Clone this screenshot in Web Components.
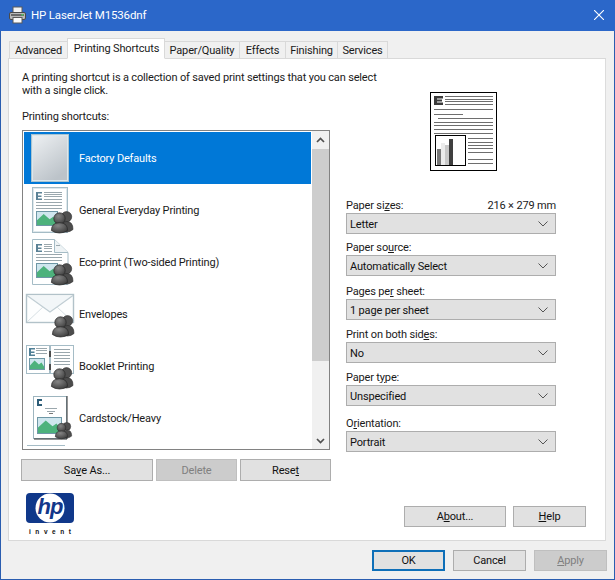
<!DOCTYPE html>
<html><head><meta charset="utf-8"><title>HP LaserJet M1536dnf</title>
<style>
html,body{margin:0;padding:0;background:#f0f0f0}
body{font:11px/13px Roboto,"Liberation Sans",sans-serif;letter-spacing:-.16px;color:#1a1a1a}
u{text-underline-offset:1px}
hp-option.a{margin-top:5px}hp-option.b{margin-top:7px}hp-option.c{margin-top:6px}hp-option.d{margin-top:9px}
</style></head><body>
<hp-dialog>
  <span slot="title">HP LaserJet M1536dnf</span>
  <hp-tabs slot="tabs">
    <hp-tab w="59">Advanced</hp-tab>
    <hp-tab w="98" selected>Printing Shortcuts</hp-tab>
    <hp-tab w="75">Paper/Quality</hp-tab>
    <hp-tab w="46">Effects</hp-tab>
    <hp-tab w="52">Finishing</hp-tab>
    <hp-tab w="50">Services</hp-tab>
  </hp-tabs>
  <hp-shortcuts-page slot="page">
    <span slot="desc">A printing shortcut is a collection of saved print settings that you can select<br>with a single click.</span>
    <span slot="listlabel">Printing shortcuts:</span>
    <hp-shortcut-list slot="list">
      <hp-shortcut icon="blank" selected>Factory Defaults</hp-shortcut>
      <hp-shortcut icon="general">General Everyday Printing</hp-shortcut>
      <hp-shortcut icon="eco">Eco-print (Two-sided Printing)</hp-shortcut>
      <hp-shortcut icon="envelope">Envelopes</hp-shortcut>
      <hp-shortcut icon="booklet">Booklet Printing</hp-shortcut>
      <hp-shortcut icon="cardstock">Cardstock/Heavy</hp-shortcut>
      <hp-shortcut icon="next"></hp-shortcut>
    </hp-shortcut-list>
    <hp-button slot="actions" w="132" h="22">Sa<u>v</u>e As...</hp-button>
    <hp-button slot="actions" w="81" h="22" disabled>Delete</hp-button>
    <hp-button slot="actions" w="91" h="22">Rese<u>t</u></hp-button>
    <hp-preview slot="preview"></hp-preview>
    <hp-option slot="options"><span slot="label">Paper si<u>z</u>es:</span><span slot="note">216 × 279 mm</span>Letter</hp-option>
    <hp-option slot="options" class="a"><span slot="label">Paper so<u>u</u>rce:</span>Automatically Select</hp-option>
    <hp-option slot="options" class="b"><span slot="label">Pages pe<u>r</u> sheet:</span>1 page per sheet</hp-option>
    <hp-option slot="options" class="c"><span slot="label">Print on both sid<u>e</u>s:</span>No</hp-option>
    <hp-option slot="options" class="c"><span slot="label">Paper t<u>y</u>pe:</span>Unspecified</hp-option>
    <hp-option slot="options" class="d"><span slot="label">O<u>r</u>ientation:</span>Portrait</hp-option>
    <hp-logo slot="logo"></hp-logo>
    <hp-button slot="help" w="102" h="21">A<u>b</u>out...</hp-button>
    <hp-button slot="help" w="73" h="21"><u>H</u>elp</hp-button>
  </hp-shortcuts-page>
  <hp-button slot="footer" w="73" h="21" primary>OK</hp-button>
  <hp-button slot="footer" w="73" h="21">Cancel</hp-button>
  <hp-button slot="footer" w="73" h="21" disabled><u>A</u>pply</hp-button>
</hp-dialog>
<script>
function def(name, css, html, init){
  customElements.define(name, class extends HTMLElement{
    constructor(){super();const r=this.attachShadow({mode:'open'});
      r.innerHTML='<style>'+css+'</style>'+(typeof html==='function'?html(this):html);}
    connectedCallback(){ if(init) init(this); }
  });
}
const people=(x,y,s)=>`<g transform="translate(${x} ${y}) scale(${s})">
<circle cx="15.5" cy="5.800" r="5.200" fill="#505050" stroke="#2c2c2c" stroke-width=".6"/>
<path d="M9 19q0-8.500 6.800-8.500q6.200 0 6.200 8q-3 2.500-6.500 2.500t-6.500-2z" fill="#4c4c4c" stroke="#2c2c2c" stroke-width=".6"/>
<circle cx="8.500" cy="7.500" r="5.700" fill="url(#pg)" stroke="#262626" stroke-width=".7"/>
<path d="M.4 19.500q0-7.800 8.100-7.800t8.100 7.800q-3.500 2.500-8.100 2.500t-8.100-2.500z" fill="url(#pg)" stroke="#262626" stroke-width=".7"/>
</g>`;
const defs=`<defs>
<radialGradient id="pg" cx=".4" cy=".3" r=".8"><stop offset="0" stop-color="#858585"/><stop offset="1" stop-color="#383838"/></radialGradient>
<linearGradient id="blank" x1="0" y1="0" x2=".6" y2="1"><stop offset="0" stop-color="#eef1f3"/><stop offset="1" stop-color="#bcc3c9"/></linearGradient>
</defs>`;
const land=(x,y,w,h)=>`<rect x="${x+.5}" y="${y+.5}" width="${w-1}" height="${h-1}" fill="#cfe6ee" stroke="#6e97a6" stroke-width="1"/>
<path d="M${x+1} ${y+h-1}V${y+h*.62}L${x+w*.35} ${y+h*.2}L${x+w*.62} ${y+h*.55}L${x+w*.78} ${y+h*.38}L${x+w-1} ${y+h*.7}V${y+h-1}z" fill="#4db27c"/>`;
const eblk=(x,y,c)=>`<path d="M${x} ${y}h6v1.600h-4v1.800h3.500v1.500h-3.500v1.600h4v1.500h-6z" fill="${c||'#5b8296'}"/>`;
const lines=(x1,x2,ys,c)=>ys.map(y=>`<path d="M${x1} ${y}.5H${x2}" stroke="${c||'#9aa7ad'}"/>`).join('');
const pagebox=(x,y,w,h)=>`<rect x="${x+.5}" y="${y+.5}" width="${w-1}" height="${h-1}" fill="#fff" stroke="#a5bcc6"/><rect x="${x+1.5}" y="${y+1.5}" width="${w-3}" height="${h-3}" fill="#fff" stroke="#dfe8ec"/>`;
const icons={
 blank:`<rect x="7.500" y="2.500" width="37" height="47" fill="url(#blank)" stroke="#a9c4d0"/><rect x="8.500" y="3.500" width="35" height="45" fill="url(#blank)" stroke="#dde7ec"/>`,
 general:pagebox(8,3,36,46)+eblk(12,8)+lines(20,38,[8,10,12,15])+lines(12,38,[18,21,24])+land(12,27,22,15)+people(27,27,1),
 eco:`<path d="M8.500 3.500h22l13.500 13v32h-35.500z" fill="#fff" stroke="#a5bcc6"/><path d="M30.500 3.500v13h13.500" fill="#eef3f5" stroke="#a5bcc6"/>`+lines(32,36,[9])+eblk(12,8)+lines(20,28,[8,10,12,15])+lines(12,38,[18,21,24])+land(12,27,22,15)+people(27,27,1),
 envelope:`<rect x="2.500" y="6.500" width="47" height="28" fill="#fdfefe" stroke="#b2c2c9" stroke-width="1.400"/><path d="M3 7.500L26 24L49 7.500" fill="#f2f6f8" stroke="#c1ced4" stroke-width="1.200"/><path d="M3 34L19 19M49 34L33 19" stroke="#d7e0e4" fill="none"/>`+people(28,27,1),
 booklet:`<rect x="2.500" y="5.500" width="23" height="28" fill="#fff" stroke="#a5bcc6"/><rect x="26.500" y="5.500" width="23" height="28" fill="#fff" stroke="#a5bcc6"/><rect x="25" y="11" width="2" height="6" fill="#4c4c4c"/><rect x="25" y="24" width="2" height="6" fill="#4c4c4c"/>`+eblk(5,8,'#4f7f96')+lines(12,23,[8,10,13])+lines(30,46,[9,12,15,18,21,24])+land(5,18,16,12),
 cardstock:`<rect x="9.500" y="4.500" width="33" height="42" fill="#fff" stroke="#9db5bf"/><path d="M43 4v43H10" fill="none" stroke="#2c2c2c" stroke-width="1"/><path d="M13 7h5v2h-3v3h3v2h-5z" fill="#2d5d78"/>`+lines(21,33,[16])+lines(23,31,[19])+lines(25,29,[21],'#777')+land(13,25,25,17)+people(31,30,.76),
 next:`<path d="M3 1.500H41" stroke="#a5bcc6"/>`
};
icons.booklet+=people(27,27,1);

def('hp-dialog',`
:host{display:flex;flex-direction:column;width:615px;height:580px;box-sizing:border-box;border:1px solid #2a5db0;border-top:0;background:#f0f0f0}
.bar{height:31px;flex:none;background:#2b67c9;color:#fff;display:flex;align-items:center;margin:0 -1px;padding-left:9px;gap:5px;box-sizing:border-box;font-size:11.500px;padding-bottom:1px}
.bar svg.pr{flex:none}
.bar .x{margin-left:auto;margin-right:11px;flex:none}
.main{flex:1;display:flex;flex-direction:column;padding:7px 8px 0 7px;min-height:0}
.foot{flex:none;height:38px;box-sizing:border-box;display:flex;justify-content:flex-end;gap:8px;padding:9px 7px 0 0}
`,`
<div class="bar">
<svg class="pr" width="17" height="18" viewBox="0 0 17 18"><rect x="4" y="1" width="9" height="6" fill="#f3f3f3" stroke="#5a5a5a"/><rect x=".5" y="6.500" width="16" height="7" rx="1.500" fill="#b9b9b9" stroke="#4a4a4a"/><rect x="2" y="8" width="13" height="2" fill="#6a6a6a"/><rect x="4" y="11.500" width="9" height="5.500" fill="#fbfbfb" stroke="#5a5a5a"/><rect x="12.500" y="8" width="2" height="1.500" fill="#4fd05f"/></svg>
<slot name="title"></slot>
<svg class="x" width="10" height="10" viewBox="0 0 10 10"><path d="M0 0L10 10M10 0L0 10" stroke="#fff" stroke-width="1.100"/></svg>
</div>
<div class="main"><slot name="tabs"></slot><slot name="page"></slot></div>
<div class="foot"><slot name="footer"></slot></div>`);

def('hp-tabs',`:host{display:flex;align-items:flex-end;height:21px;margin-left:1px;position:relative;z-index:1;flex:none;margin-bottom:-1px}`,`<slot></slot>`);

def('hp-tab',`
:host{display:flex;align-items:center;justify-content:center;box-sizing:border-box;height:18px;border:1px solid #d9d9d9;border-bottom:1px solid #d9d9d9;border-left-width:0;background:#f0f0f0;white-space:nowrap;padding-top:0}
:host(:first-child){border-left-width:1px}
:host([selected]){height:21px;background:#fff;border-left-width:1px;border-bottom-color:#fff;margin-left:-1px;padding:0 0 1px 1px}
`,`<slot></slot>`,el=>{el.style.width=el.getAttribute('w')+'px';});

def('hp-shortcuts-page',`
:host{display:flex;flex-direction:column;flex:1;box-sizing:border-box;background:#fff;border:1px solid #d9d9d9;margin-left:0;min-height:0;padding:12px 19px 0 12px;border-right-color:#dcdcdc}
.top{display:flex;gap:15px;flex:none}
.left{width:310px;flex:none;display:flex;flex-direction:column}
.desc{padding-left:1px;display:block;white-space:nowrap}
.lbl{padding-left:1px;margin-top:13px;margin-bottom:7px;display:block}
.acts{display:flex;gap:3px;margin-top:9px}
.right{width:210px;flex:none;display:flex;flex-direction:column;padding-top:21px}
.pv{margin-left:84px;margin-bottom:26px}
.bot{display:flex;flex:none;margin-top:12px}
.lg{margin-left:5px}
.hl{margin-left:auto;margin-top:13px;display:flex;gap:7px}
`,`
<div class="top">
  <div class="left">
    <div class="desc"><slot name="desc"></slot></div>
    <div class="lbl"><slot name="listlabel"></slot></div>
    <slot name="list"></slot>
    <div class="acts"><slot name="actions"></slot></div>
  </div>
  <div class="right">
    <div class="pv"><slot name="preview"></slot></div>
    <slot name="options"></slot>
  </div>
</div>
<div class="bot"><div class="lg"><slot name="logo"></slot></div><div class="hl"><slot name="help"></slot></div></div>`);

def('hp-shortcut-list',`
:host{display:flex;box-sizing:border-box;height:320px;margin-left:1px;width:308px;border:1px solid #828282;background:#fff;overflow:hidden}
.items{flex:1;min-width:0;padding:1px 1px 0 1px;overflow:hidden}
.sb{width:17px;flex:none;display:flex;flex-direction:column;background:#f0f0f0}
.sb svg{display:block;flex:none}
.up{height:18px;display:flex;align-items:center;justify-content:center}
.th{height:212px;background:#cdcdcd;flex:none}
.sp{flex:1}
.dn{height:17px;display:flex;align-items:center;justify-content:center}
`,`
<div class="items"><slot></slot></div>
<div class="sb">
  <div class="up"><svg width="9" height="6" viewBox="0 0 9 6"><path d="M1 5L4.500 1.500L8 5" fill="none" stroke="#505050" stroke-width="1.700"/></svg></div>
  <div class="th"></div><div class="sp"></div>
  <div class="dn"><svg width="9" height="6" viewBox="0 0 9 6"><path d="M1 1L4.500 4.500L8 1" fill="none" stroke="#505050" stroke-width="1.700"/></svg></div>
</div>`);

def('hp-shortcut',`
:host{display:flex;align-items:center;height:52px;gap:3px;white-space:nowrap}
:host([selected]){background:#0078d7;color:#fff}
svg{flex:none;display:block}
`,el=>`<svg width="52" height="52" viewBox="0 0 52 52">${defs}${icons[el.getAttribute('icon')]||''}</svg><slot></slot>`);

def('hp-button',`
:host{display:inline-flex;align-items:center;justify-content:center;box-sizing:border-box;background:#e1e1e1;border:1px solid #adadad;color:#111;white-space:nowrap;flex:none}
:host([disabled]){background:#cccccc;border-color:#bfbfbf;color:#808080}
:host([primary]){border:2px solid #0e6fb8}
`,`<slot></slot>`,el=>{el.style.width=el.getAttribute('w')+'px';el.style.height=el.getAttribute('h')+'px';});

def('hp-option',`
:host{display:block;width:210px}
.h{display:flex;justify-content:space-between;height:16px;align-items:center}
.s{display:flex;align-items:center;box-sizing:border-box;height:21px;border:1px solid #adadad;background:#e1e1e1;padding:1px 7px 0 3px;color:#111}
.s svg{margin-left:auto;display:block}
`,`<div class="h"><span><slot name="label"></slot></span><span><slot name="note"></slot></span></div>
<div class="s"><span><slot></slot></span><svg width="10" height="6" viewBox="0 0 10 6"><path d="M.5 .5L5 5L9.500 .5" fill="none" stroke="#555" stroke-width="1"/></svg></div>`);

def('hp-preview',`:host{display:block;width:67px;height:79px}svg{display:block}`,()=>{
 let l='';
 const r=(x,y,x2)=>`<path d="M${x} ${y}.5H${x2}" stroke="#6e6e6e"/>`;
 [4,7,9,12].forEach(y=>l+=r(15,y,63));
 l+=r(4,17,63);
 l+=r(4,22,33);
 l+=r(8,26,63);
 [30,33,37,41].forEach(y=>l+=r(4,y,63));
 [46,50,53,56,60,67,71].forEach(y=>l+=r(38,y,63));
 return `<svg width="67" height="79" viewBox="0 0 67 79"><rect x=".5" y=".5" width="66" height="78" fill="#fff" stroke="#000"/>
 <path d="M4 4h9v2.500h-6v1h5v2h-5v1h6v2.500h-9z" fill="#3b3b3b"/>${l}
 <rect x="5.500" y="43.500" width="30" height="30" fill="#fff" stroke="#000"/>
 <rect x="7" y="57" width="4" height="16" fill="#777"/><rect x="11" y="51" width="4" height="22" fill="#ececec"/><rect x="15" y="53" width="4" height="20" fill="#c9c9c9"/><rect x="19" y="47" width="4" height="26" fill="#3f3f3f"/></svg>`;
});

def('hp-logo',`
:host{display:block;width:48px;color:#111}
svg{display:block}
.t{font:italic bold 22px "Liberation Sans",sans-serif;fill:#12378a;letter-spacing:-1px}
.i{display:flex;justify-content:space-between;font:bold 6.500px/8px "Liberation Sans",sans-serif;letter-spacing:0;margin-top:5px;padding:0 3px}
`,`<svg width="48" height="30" viewBox="0 0 48 30"><rect width="48" height="30" rx="4" fill="#10388a"/><circle cx="24" cy="15" r="14.500" fill="#fff"/><text class="t" x="24" y="21" text-anchor="middle">hp</text></svg>
<div class="i"><span>i</span><span>n</span><span>v</span><span>e</span><span>n</span><span>t</span></div>`);
</script>
</body></html>
